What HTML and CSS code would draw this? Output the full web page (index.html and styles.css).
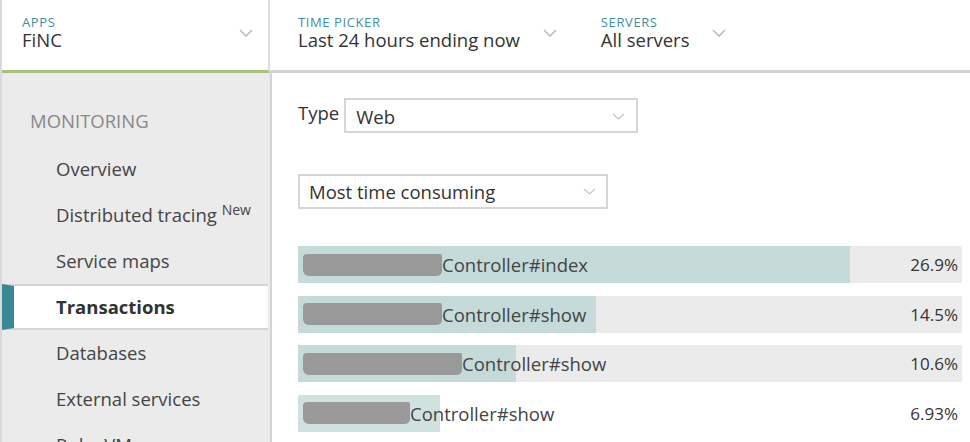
FILE: index.html
```html
<!doctype html>
<html lang="en">

<head>
    <meta charset="UTF-8">
    <title>Transactions - FiNC</title>
    <link rel="stylesheet" href="styles.css">
</head>

<body>
    <div class="page">
        <header class="topbar">
            <div class="picker apps">
                <div class="picker-text">
                    <span class="picker-label">Apps</span>
                    <span class="picker-value">FiNC</span>
                </div>
                <svg class="chevron" width="14" height="8" viewBox="0 0 14 8"><polyline points="1,1 7,7 13,1"/></svg>
            </div>
            <div class="picker">
                <div class="picker-text">
                    <span class="picker-label">Time picker</span>
                    <span class="picker-value">Last 24 hours ending now</span>
                </div>
                <svg class="chevron" width="14" height="8" viewBox="0 0 14 8"><polyline points="1,1 7,7 13,1"/></svg>
            </div>
            <div class="picker">
                <div class="picker-text">
                    <span class="picker-label">Servers</span>
                    <span class="picker-value">All servers</span>
                </div>
                <svg class="chevron" width="14" height="8" viewBox="0 0 14 8"><polyline points="1,1 7,7 13,1"/></svg>
            </div>
            <div class="spacer"></div>
        </header>

        <div class="main">
            <aside class="sidebar">
                <h3 class="side-title">Monitoring</h3>
                <ul class="side-menu">
                    <li class="side-item"><a href="#">Overview</a></li>
                    <li class="side-item"><a href="#">Distributed tracing <sup>New</sup></a></li>
                    <li class="side-item"><a href="#">Service maps</a></li>
                    <li class="side-item active"><a href="#">Transactions</a></li>
                    <li class="side-item"><a href="#">Databases</a></li>
                    <li class="side-item"><a href="#">External services</a></li>
                    <li class="side-item"><a href="#">Ruby VMs</a></li>
                </ul>
            </aside>

            <section class="content">
                <div class="type-row">
                    <span class="type-label">Type</span>
                    <div class="select type-select">
                        <span>Web</span>
                        <svg class="chevron small" width="13" height="7" viewBox="0 0 13 7"><polyline points="1,1 6.5,6 12,1"/></svg>
                    </div>
                </div>

                <div class="select sort-select">
                    <span>Most time consuming</span>
                    <svg class="chevron small" width="13" height="7" viewBox="0 0 13 7"><polyline points="1,1 6.5,6 12,1"/></svg>
                </div>

                <ul class="bars">
                    <li class="bar" style="--pct: 83.1%">
                        <span class="name"><span class="blur" style="width: 139px"></span>Controller#index</span>
                        <span class="pct">26.9%</span>
                    </li>
                    <li class="bar" style="--pct: 44.9%">
                        <span class="name"><span class="blur" style="width: 139px"></span>Controller#show</span>
                        <span class="pct">14.5%</span>
                    </li>
                    <li class="bar" style="--pct: 32.8%">
                        <span class="name"><span class="blur" style="width: 159px"></span>Controller#show</span>
                        <span class="pct">10.6%</span>
                    </li>
                    <li class="bar last" style="--pct: 21.4%">
                        <span class="name"><span class="blur" style="width: 107px"></span>Controller#show</span>
                        <span class="pct">6.93%</span>
                    </li>
                </ul>
            </section>
        </div>
    </div>
</body>

</html>
```

FILE: styles.css
```css
@charset "UTF-8";
*,
*:after,
*:before {
    box-sizing: border-box;
    padding: 0;
    margin: 0;
}

body {
    font-family: "Open Sans", "Liberation Sans", sans-serif;
    color: #444;
    background: #fff;
    overflow: hidden;
}

ul {
    list-style: none;
}

a {
    text-decoration: none;
    color: inherit;
}

.page {
    border-left: 2px solid #dadada;
    height: 442px;
    overflow: hidden;
}

/* top bar with pickers */
.topbar {
    display: flex;
    height: 73px;
}

.picker {
    display: flex;
    align-items: flex-start;
    padding: 16px 0 0 44px;
    border-bottom: 3px solid #d3d3d3;
}

.picker.apps {
    width: 268px;
    padding-left: 20px;
    padding-right: 15px;
    justify-content: space-between;
    border-right: 2px solid #dcdcdc;
    border-bottom-color: #a6c281;
}

.picker.apps + .picker {
    padding-left: 28px;
}

.picker-text {
    display: flex;
    flex-direction: column;
}

.picker-label {
    font-size: 13px;
    line-height: 13px;
    letter-spacing: 0.6px;
    text-transform: uppercase;
    color: #3f8f9e;
}

.picker-value {
    font-size: 18.5px;
    line-height: 21px;
    color: #333;
}

.chevron {
    fill: none;
    stroke: #bbb;
    stroke-width: 1.6;
    margin-top: 13px;
    margin-left: 23px;
}

.apps .chevron {
    margin-left: 0;
}

.spacer {
    flex: 1;
    border-bottom: 3px solid #d3d3d3;
}

/* main area */
.main {
    display: flex;
}

.sidebar {
    width: 270px;
    min-height: 369px;
    padding: 25px 2px 0 0;
    background: #ebebeb;
    border-right: 2px solid #d3d3d3;
}

.side-title {
    font-size: 18.5px;
    font-weight: normal;
    line-height: 46px;
    margin-bottom: 2px;
    padding-left: 28px;
    text-transform: uppercase;
    color: #888;
}

.side-item a {
    display: block;
    font-size: 18.5px;
    line-height: 46px;
    padding-left: 54px;
    color: #444;
    white-space: nowrap;
}

.side-item sup {
    font-size: 14px;
    vertical-align: 7px;
    line-height: 0;
}

.side-item.active a {
    background: #fff;
    border-top: 2px solid #d5d5d5;
    border-bottom: 2px solid #d5d5d5;
    border-left: 12px solid #3a8893;
    padding-left: 42px;
    line-height: 42px;
    font-weight: bold;
    color: #333;
}

.content {
    flex: 1;
    padding: 25px 8px 0 26px;
}

.type-row {
    display: flex;
    align-items: flex-start;
}

.type-label {
    font-size: 18.5px;
    line-height: 30px;
    margin-right: 5px;
    color: #333;
}

.select {
    display: flex;
    align-items: center;
    justify-content: space-between;
    height: 35px;
    border: 2px solid #d6d6d6;
    font-size: 18.5px;
    color: #333;
    background: #fff;
}

.type-select {
    width: 294px;
    padding: 2px 11px 0 10px;
}

.sort-select {
    width: 310px;
    margin-top: 41px;
    padding: 0 10px 0 9px;
}

.chevron.small {
    margin: 0;
    stroke: #c4c4c4;
    stroke-width: 1.2;
}

/* transaction bars */
.bars {
    margin-top: 37px;
}

.bar {
    display: flex;
    align-items: center;
    justify-content: space-between;
    height: 37px;
    margin-bottom: 12.5px;
    padding: 0 4px 0 5px;
    font-size: 18.5px;
    background: linear-gradient(to right, #c5dbd9 var(--pct), #ebebeb var(--pct));
}

.bar.last {
    background: linear-gradient(to right, #d0e2e0 var(--pct), transparent var(--pct));
}

.name {
    display: flex;
    align-items: center;
    color: #444;
}

.blur {
    display: inline-block;
    height: 22px;
    background: #999;
    border-radius: 4px 2px 5px 6px;
}

.pct {
    font-size: 17px;
    color: #333;
}
```
